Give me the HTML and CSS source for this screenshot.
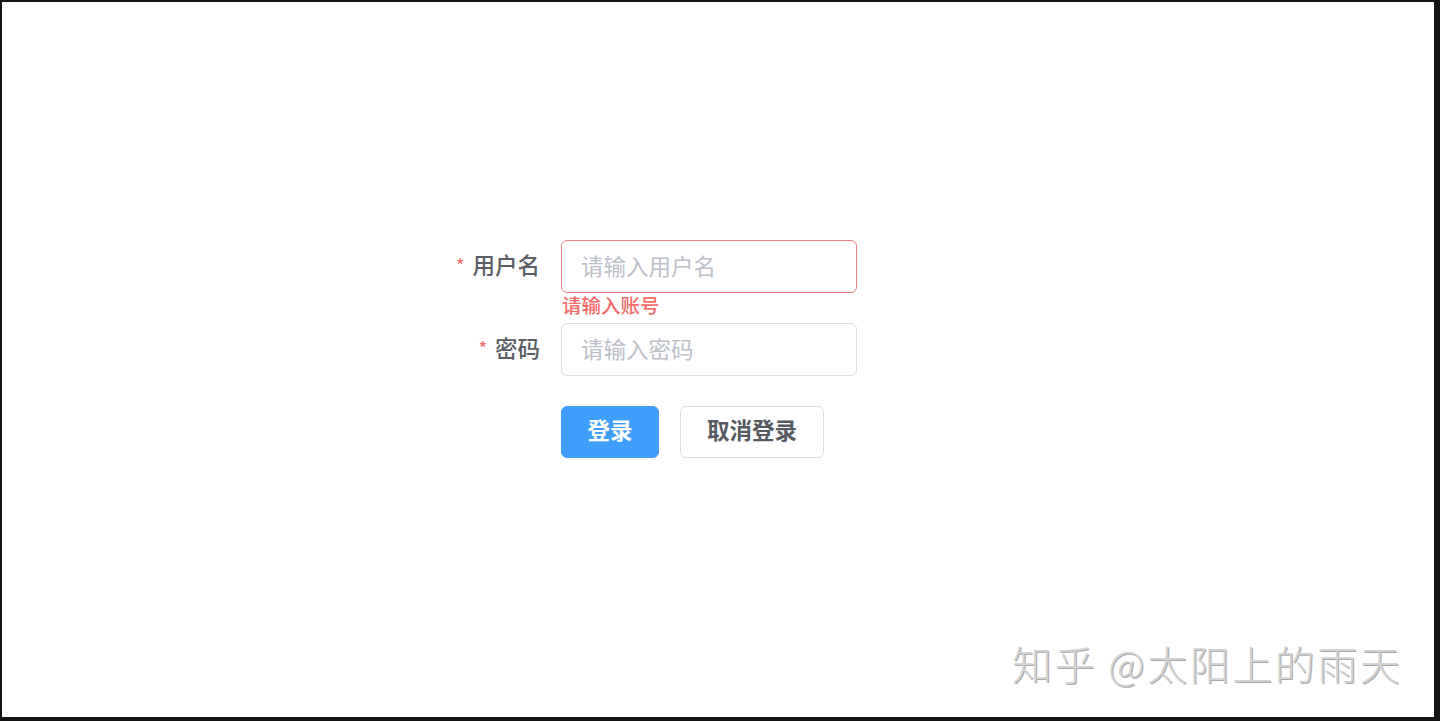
FILE: index.html
```html
<!DOCTYPE html>
<html lang="zh-CN">
<head>
<meta charset="utf-8">
<title>登录</title>
<link rel="stylesheet" href="styles.css">
</head>
<body>
<div class="screen">
  <form class="form">
    <label class="label" for="user"><span class="star">*</span>用户名</label>
    <div class="field">
      <input id="user" class="input is-error" type="text" placeholder="请输入用户名">
      <div class="error">请输入账号</div>
    </div>
    <label class="label" for="pwd"><span class="star">*</span>密码</label>
    <div class="field">
      <input id="pwd" class="input" type="password" placeholder="请输入密码">
      <div class="spacer"></div>
    </div>
    <div></div>
    <div class="actions">
      <button type="button" class="btn btn-primary">登录</button>
      <button type="button" class="btn btn-default">取消登录</button>
    </div>
  </form>
  <div class="watermark">知乎 @太阳上的雨天</div>
</div>
</body>
</html>
```

FILE: styles.css
```css
html, body {
  margin: 0;
  padding: 0;
  background: #141414;
}
body {
  width: 1440px;
  height: 721px;
  overflow: hidden;
  font-family: "Noto Sans CJK SC", "Noto Sans", sans-serif;
}
.screen {
  position: relative;
  margin: 2px 0 0 2px;
  width: 1432px;
  height: 715px;
  background: #ffffff;
  padding-top: 238px;
  box-sizing: border-box;
}
.form {
  margin-left: 420px;
  display: grid;
  grid-template-columns: 139px 296px;
  align-items: start;
}
.label {
  box-sizing: border-box;
  height: 53px;
  line-height: 49px;
  padding: 0 21px 4px 0;
  text-align: right;
  font-size: 22.5px;
  font-weight: 500;
  color: #5a5d63;
}
.star {
  color: #f56c6c;
  font-size: 17px;
  margin-right: 8px;
  position: relative;
  top: -2px;
}
.field {
  display: flex;
  flex-direction: column;
}
.input {
  box-sizing: border-box;
  width: 296px;
  height: 53px;
  border: 1.5px solid #dcdfe6;
  border-radius: 6px;
  padding: 0 19px 3px;
  font-family: inherit;
  font-size: 22.5px;
  color: #606266;
  outline: none;
  background: #fff;
}
.input::placeholder {
  color: #bcc0c8;
}
.input.is-error {
  border-color: #f27f7f;
}
.error {
  height: 30px;
  line-height: 24px;
  font-size: 19.5px;
  font-weight: 500;
  color: #f56c6c;
  padding-left: 1px;
}
.spacer {
  height: 30px;
}
.actions {
  display: flex;
  gap: 21px;
}
.btn {
  box-sizing: border-box;
  height: 52px;
  border-radius: 6px;
  font-family: inherit;
  font-size: 22.5px;
  font-weight: 700;
  line-height: 1;
  padding: 0 0 6px;
  cursor: pointer;
}
.btn-primary {
  width: 98px;
  background: #409eff;
  border: 1.5px solid #409eff;
  color: #ffffff;
}
.btn-default {
  width: 144px;
  background: #ffffff;
  border: 1.5px solid #dcdfe6;
  color: #555a60;
}
.watermark {
  position: absolute;
  left: 1010px;
  top: 632px;
  font-size: 40px;
  font-weight: 300;
  letter-spacing: 2.5px;
  color: #d2d2d2;
  text-shadow: 1px 1px 0 #a8a8a8;
  white-space: nowrap;
}
```
